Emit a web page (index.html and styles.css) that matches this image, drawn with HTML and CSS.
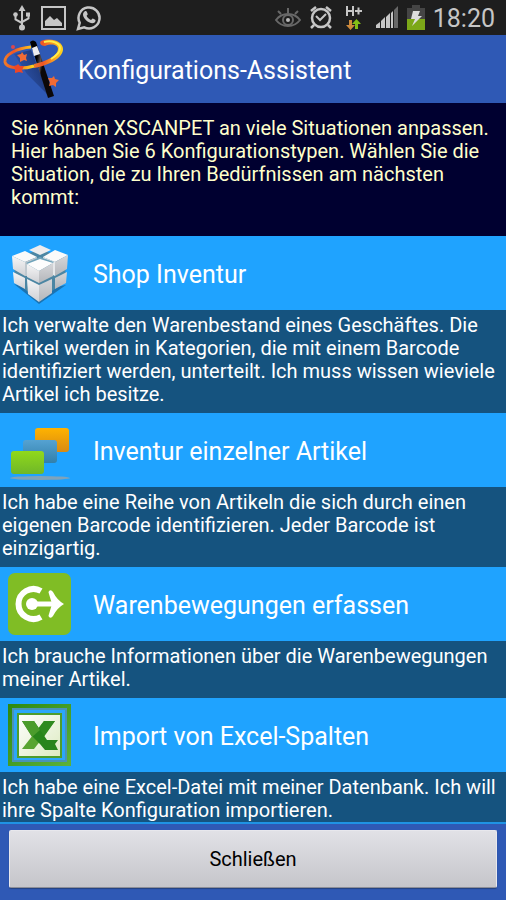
FILE: index.html
```html
<!DOCTYPE html>
<html lang="de">
<head>
<meta charset="utf-8">
<meta name="viewport" content="width=device-width, initial-scale=1">
<title>Konfigurations-Assistent</title>
<link rel="stylesheet" href="styles.css">
</head>
<body>
<div class="status">
  <div class="status-group">
    <svg width="18" height="26" viewBox="0 0 18 26" fill="none" stroke="#c6c6c6" stroke-width="2"><path d="M9 4v17M2.500 11v3.500L9 18M15.500 11v2.500L9 17"/><path d="M5.500 6 9 0l3.500 6z" fill="#c6c6c6" stroke="none"/><circle cx="9" cy="22.500" r="3" fill="#c6c6c6" stroke="none"/><circle cx="2.500" cy="9.500" r="2.300" fill="#c6c6c6" stroke="none"/><path d="M13 7.500h4v4h-4z" fill="#c6c6c6" stroke="none"/></svg>
    <svg width="25" height="24" viewBox="0 0 25 24"><path d="M1 1h23v22H1z" fill="none" stroke="#c6c6c6" stroke-width="2"/><path d="M4 20v-5l5-5 4 4 3-2 5 5v3z" fill="#c6c6c6"/></svg>
    <svg width="26" height="26" viewBox="0 0 26 26"><path d="M2 24l1.700-6.200A10.500 10.500 0 1 1 8.200 22.300z" fill="none" stroke="#c6c6c6" stroke-width="2.500"/><path d="M8.500 6.500c1-.8 2-.5 2.300.3l.9 2.200c.2.600-.9 1.500-1.100 1.800.9 2 2.400 3.500 4.400 4.300.5-.3 1.300-1.700 1.900-1.500l2.300 1.200c.8.500.2 2.400-.9 3-1.400.8-3.200.5-5.300-.5-2.700-1.300-4.500-3.300-5.600-5.800-.8-1.900-.4-4 1.100-5z" fill="#c6c6c6"/></svg>
  </div>
  <div class="status-group status-right">
    <svg width="26" height="22" viewBox="0 0 26 22" fill="none" stroke="#686868" stroke-width="2"><path d="M1 13c6-8 18-8 24 0-6 8-18 8-24 0z"/><circle cx="13" cy="13" r="5"/><circle cx="13" cy="13" r="2" fill="#bbb" stroke="none"/><path d="M13 6V1M6 7 3 4M20 7l3-3"/></svg>
    <svg width="24" height="25" viewBox="0 0 24 25" fill="none" stroke="#c6c6c6" stroke-width="2.500"><circle cx="12" cy="13" r="9"/><path d="M2 6l5-4M22 6l-5-4M5 20l-3 3M19 20l3 3"/><path d="M7 11l4 4 6-6" stroke-width="2"/></svg>
    <svg class="net" width="18" height="25" viewBox="0 0 18 25"><path d="M2 1v10M8 1v10M2 6h6M10 6h7M13.500 2.500v7" stroke="#c6c6c6" stroke-width="2"/><path d="M4 15h3v5h3l-4.500 5L1 20h3z" fill="#ce8a3c"/><path d="M10 24h3v-5h3l-4.500-5L7 19h3z" fill="#84bd17"/></svg>
    <svg width="24" height="23" viewBox="0 0 24 23"><path d="M1 22v-3l4-3v6zM6 22v-7l4-4v11zM11 22V11l4-4v15z" fill="#c6c6c6"/><path d="M16 22V7l2-2v17z" fill="#c6c6c6"/><path d="M19 22V4l4-4v22z" fill="#686868"/></svg>
    <svg width="18" height="25" viewBox="0 0 18 25"><path d="M0 3h5V0h8v3h5v11H0z" fill="#454545"/><path d="M0 14h18v11H0z" fill="#7ca818"/><path d="M6 6h7l-2 5h4L5 21l3-7H4z" fill="#ddd"/></svg>
    <span class="clock">18:20</span>
  </div>
</div>

<header class="bar">
  <svg width="66" height="66" viewBox="0 0 66 66">
    <defs>
      <linearGradient id="ring" x1="0" y1="0" x2="1" y2="0"><stop offset="0" stop-color="#f07a28"/><stop offset=".3" stop-color="#ee5526"/><stop offset=".6" stop-color="#f78f22"/><stop offset="1" stop-color="#ffd81c"/></linearGradient>
      <linearGradient id="wand" x1="0" x2="1" y2=".4"><stop offset=".35" stop-color="#000"/><stop offset=".5" stop-color="#5c5150"/><stop offset=".6" stop-color="#0c0808"/></linearGradient>
      <linearGradient id="trail" x1="1" y1="0" x2="0" y2=".6"><stop stop-color="#0c1638" stop-opacity=".8"/><stop offset="1" stop-color="#1c3372" stop-opacity=".1"/></linearGradient>
    </defs>
    <path d="M31 14 49 60 27 38 14 18z" fill="url(#trail)"/>
    <path d="M31 11C17 12 4 19 5 26c1 6 16 8 29 4" fill="none" stroke="url(#ring)" stroke-width="3"/>
    <path d="M30 6q3-3 6 0l18 54-6 2z" fill="url(#wand)"/>
    <path d="M32 12l5-2 3 8-6 2z" fill="#ececf0"/>
    <path d="M41 5c11-4 22 1 22 8 0 9-13 16-29 19v-4c14-3 24-9 24-15 0-4-6-6-13-3-4 0-6-3-4-5z" fill="url(#ring)"/>
    <path d="M44 6c8-2 16 1 16 6 0 4-4 8-9 11" fill="none" stroke="#fff04a" stroke-width="2"/>
    <path d="M22 16l2 3 3-1-1 4 1 3-3-1-4 2v-4l-3-3 4-1z" fill="#f16b35"/>
    <path d="M54 40l1 3 4 1-3 3v4l-3-2-4 1 1-4-2-4h4z" fill="#f16b35"/>
    <path d="M18 28l2 2h4l-2 4 1 3-4-1-4 1v-4l-1-3 3-1z" fill="#ec4728"/>
    <circle cx="13" cy="11" r="2" fill="#d9474e"/>
  </svg>
  <h1>Konfigurations-Assistent</h1>
</header>

<p class="intro">Sie können XSCANPET an viele Situationen anpassen. Hier haben Sie 6 Konfigurationstypen. Wählen Sie die Situation, die zu Ihren Bedürfnissen am nächsten kommt:</p>

<main class="list">
  <section>
    <button class="row" type="button" aria-describedby="d1">
      <svg width="64" height="64" viewBox="0 0 64 64">
        <defs>
          <linearGradient id="face" x1="0" y1="0" x2="0" y2="1"><stop offset="0" stop-color="#f6f6f7"/><stop offset="1" stop-color="#cfd0d4"/></linearGradient>
          <linearGradient id="side" x1="0" y1="0" x2="0" y2="1"><stop offset="0" stop-color="#d6d7da"/><stop offset="1" stop-color="#b4b6ba"/></linearGradient>
        </defs>
        <path d="M6 43 31 63l27-19-10 2-16 9-16-9z" fill="#17547f" opacity=".6"/>
        <path d="M6 16 32 9l26 7-1 25-26 18L7 41z" fill="#4c86a3"/>
        <path d="M21 9 32 4l11 5-11 5z" fill="#ededee"/>
        <path d="M4 15l13-5 12 6-12 5z" fill="#fafafa"/><path d="M4 15l13 6v14L5 28z" fill="url(#face)"/><path d="M17 21l12-5v3l-10 4v12l-2 0z" fill="#c0c9cf"/>
        <path d="M35 16l12-7 13 5-13 7z" fill="#fafafa"/><path d="M47 21l13-7-1 14-12 7z" fill="url(#side)"/><path d="M35 16l12 5v14l-2-1V23l-10-4z" fill="#e6e8ea"/>
        <path d="M5 31l12 6v11L6 42z" fill="url(#face)"/><path d="M47 37l12-6-1 11-11 6z" fill="url(#side)"/>
        <path d="M18 22l14-6 14 5-15 10z" fill="#6fa3ba"/>
        <path d="M19 23l13-5 13 4-14 8z" fill="#fdfdfd"/><path d="M19 23l12 7v12l-12-6z" fill="url(#face)"/><path d="M31 30l14-8v13l-14 7z" fill="url(#side)"/>
        <path d="M19 38l12 6v17L20 53z" fill="url(#face)"/><path d="M31 44l13-6v14l-13 9z" fill="url(#side)"/>
      </svg>
      <span>Shop Inventur</span>
    </button>
    <p id="d1" class="desc">Ich verwalte den Warenbestand eines Geschäftes. Die Artikel werden in Kategorien, die mit einem Barcode identifiziert werden, unterteilt. Ich muss wissen wieviele Artikel ich besitze.</p>
  </section>
  <section>
    <button class="row" type="button" aria-describedby="d2">
      <svg width="64" height="64" viewBox="0 0 64 64">
        <defs>
          <linearGradient id="or" x2="0" y2="1"><stop stop-color="#ffb300"/><stop offset="1" stop-color="#d88a13"/></linearGradient>
          <linearGradient id="bl" x2="0" y2="1"><stop stop-color="#55a2d2"/><stop offset="1" stop-color="#3280aa"/></linearGradient>
          <linearGradient id="gr" x2="0" y2="1"><stop stop-color="#91d91b"/><stop offset="1" stop-color="#6fb729"/></linearGradient>
        </defs>
        <ellipse cx="32" cy="60" rx="30" ry="2" fill="#7fa3bb"/>
        <rect x="27" y="10" width="34" height="24" rx="3" fill="url(#or)"/><rect x="15" y="22" width="34" height="23" rx="3" fill="url(#bl)"/><rect x="3" y="33" width="33" height="23" rx="3" fill="url(#gr)"/>
      </svg>
      <span>Inventur einzelner Artikel</span>
    </button>
    <p id="d2" class="desc">Ich habe eine Reihe von Artikeln die sich durch einen eigenen Barcode identifizieren. Jeder Barcode ist einzigartig.</p>
  </section>
  <section>
    <button class="row" type="button" aria-describedby="d3">
      <svg width="64" height="64" viewBox="0 0 64 64"><rect x="0" y="1" width="63" height="62" rx="7" fill="#80bd25"/><path d="M33 19a15 15 0 1 0 0 26" fill="none" stroke="#fff" stroke-width="6"/><circle cx="24" cy="32" r="6" fill="#fff"/><path d="M24 32h26" stroke="#fff" stroke-width="5"/><path d="M41 19q2-2 4 1 4 8 11 12-7 4-11 12-2 3-4 1-1-1 0-3l3-10-3-10q-1-2 0-3z" fill="#fff"/></svg>
      <span>Warenbewegungen erfassen</span>
    </button>
    <p id="d3" class="desc">Ich brauche Informationen über die Warenbewegungen meiner Artikel.</p>
  </section>
  <section>
    <button class="row" type="button" aria-describedby="d4">
      <svg width="64" height="64" viewBox="0 0 64 64">
        <defs><linearGradient id="xf" x1="0" y1="0" x2="1" y2="1"><stop stop-color="#2f8a10"/><stop offset="1" stop-color="#5cb03a"/></linearGradient><linearGradient id="xp" x1="0" y1="0" x2="1" y2="1"><stop stop-color="#fff"/><stop offset="1" stop-color="#dceac0"/></linearGradient></defs>
        <path d="M2 3h59v58H2z" fill="#2ba6fb" stroke="url(#xf)" stroke-width="4"/><path d="M5 6h53v52H5z" fill="none" stroke="#4a93b4" stroke-width="2"/>
        <path d="M10 11h43v43H10z" fill="url(#xp)" stroke="#4e9d2c" stroke-width="2"/>
        <path d="M47 18H36L14 46h12l7-9z" fill="#58a431"/><path d="M47 18H36l-8 11 5 9z" fill="#2f8a20"/>
        <path d="M14 18h12l13 19h11l-3 4 3 6H37l-5-6-9-9z" fill="#28851b"/><path d="M14 18h12l6 9-8 7z" fill="#4b9c2c"/>
      </svg>
      <span>Import von Excel-Spalten</span>
    </button>
    <p id="d4" class="desc">Ich habe eine Excel-Datei mit meiner Datenbank. Ich will ihre Spalte Konfiguration importieren.</p>
  </section>
</main>

<footer class="footer"><button class="close" type="button">Schließen</button></footer>
</body>
</html>
```
FILE: styles.css
```css
* { box-sizing: border-box; }
body {
  margin: 0;
  height: 100vh;
  display: flex;
  flex-direction: column;
  background: #000030;
  color: #fff;
  font-family: Roboto, "Liberation Sans", sans-serif;
  font-size: 20px;
  line-height: 23px;
}
svg { display: block; flex: none; }
h1, p { margin: 0; font-weight: 400; }
button { border: 0; font: inherit; cursor: pointer; }
.status {
  flex: none;
  display: flex;
  justify-content: space-between;
  height: 35px;
  padding: 0 11px 0 13px;
  background: #1e1e1e;
}
.status-group { display: flex; align-items: center; gap: 10px; }
.status-right { gap: 8px; }
.net { margin: 0 4px; }
.clock { padding-top: 2px; font-size: 25px; line-height: 33px; color: #c6c6c6; }
.bar {
  flex: none;
  display: flex;
  align-items: center;
  gap: 12px;
  height: 68px;
  background: #2f59b5;
}
.bar h1, .row span { padding-top: 3px; }
.bar h1 { font-size: 25px; line-height: 30px; }
.intro {
  flex: none;
  padding: 14px 11px 27px;
  color: #ffffcb;
}
.list {
  flex: 1;
  min-height: 0;
  overflow-y: auto;
  scrollbar-width: none;
  background: #15537f;
}
.row {
  display: flex;
  align-items: center;
  gap: 21px;
  width: 100%;
  height: 74px;
  padding: 0 8px;
  background: #1fa3ff;
  color: #fff;
  font-size: 25px;
  line-height: 30px;
  text-align: left;
}
.desc { padding: 4px 2px 7px; }
.footer {
  flex: none;
  padding: 6px 9px 12px;
  border-top: 2px solid #1f93e4;
  background: #2f59b5;
}
.close {
  display: block;
  width: 100%;
  height: 58px;
  border: 1px solid #e8e8ed;
  border-bottom-color: #8d8f98;
  border-radius: 2px;
  background: linear-gradient(#e1e1e6, #c5c5ca);
  box-shadow: 0 1px 1px #24417f;
  color: #000;
}
```
